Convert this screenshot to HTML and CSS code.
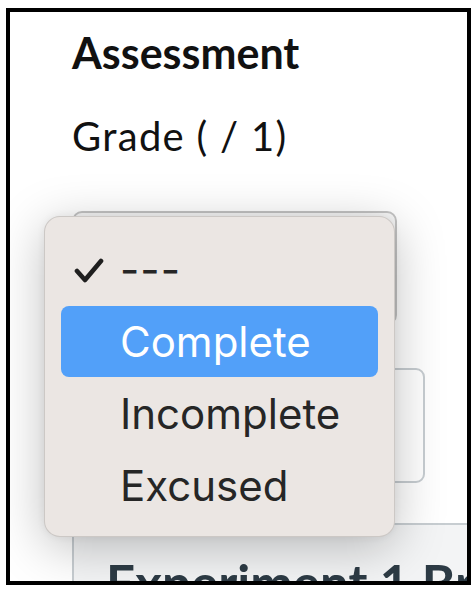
FILE: index.html
```html
<!DOCTYPE html>
<html lang="en">
<head>
<meta charset="utf-8">
<title>Assessment</title>
<link rel="stylesheet" href="styles.css">
</head>
<body>
<div class="frame">
  <div class="content">
    <h2 class="title">Assessment</h2>
    <div class="label">Grade ( / 1)</div>
    <div class="select"></div>
    <div class="field"></div>
    <div class="card">
      <div class="card-title">Experiment 1 Brief</div>
    </div>
  </div>
  <div class="menu">
    <div class="item">
      <svg class="check" viewBox="0 0 30 26" width="30" height="26"><path d="M3 13 L11 22 L27 3" fill="none" stroke="#1f1f1f" stroke-width="4.6" stroke-linecap="round" stroke-linejoin="round"/></svg>
      <span class="dash">---</span>
    </div>
    <div class="item active">Complete</div>
    <div class="item">Incomplete</div>
    <div class="item">Excused</div>
  </div>
</div>
</body>
</html>
```

FILE: styles.css
```css
html, body {
  margin: 0;
  padding: 0;
  background: #ffffff;
}

.frame {
  margin: 8px 0 0 6px;
  width: 465px;
  height: 577px;
  border: 4px solid #000;
  box-sizing: border-box;
  position: relative;
  overflow: hidden;
  background: #ffffff;
}

.content {
  padding-left: 62px;
  font-family: Lato, "Liberation Sans", sans-serif;
  color: #111;
}

.title {
  margin: 15px 0 0 0;
  font-size: 43px;
  line-height: 52px;
  font-weight: 700;
}

.label {
  margin-top: 33px;
  font-size: 40px;
  line-height: 48px;
  font-weight: 400;
  letter-spacing: 1.3px;
}

.select {
  margin-top: 51px;
  width: 325px;
  height: 114px;
  box-sizing: border-box;
  border: 2px solid #c4c4c4;
  border-radius: 10px;
  background: #f7f7f7;
}

.field {
  margin-top: 43px;
  width: 353px;
  height: 115px;
  box-sizing: border-box;
  border: 2px solid #c7cdd1;
  border-radius: 9px;
  background: #ffffff;
}

.card {
  margin-top: 40px;
  width: 440px;
  height: 120px;
  box-sizing: border-box;
  border-top: 2px solid #c7cdd1;
  border-left: 2px solid #c7cdd1;
  background: #f3f4f5;
  padding: 28px 0 0 32px;
}

.card-title {
  font-size: 51px;
  line-height: 60px;
  font-weight: 700;
  color: #2d3b45;
  white-space: nowrap;
}

.menu {
  position: absolute;
  left: 34px;
  top: 204px;
  width: 351px;
  height: 321px;
  box-sizing: border-box;
  padding: 17px 16px 0 16px;
  background: #ebe6e3;
  border: 1px solid rgba(0, 0, 0, 0.13);
  border-radius: 16px;
  box-shadow: 0 10px 50px rgba(0, 0, 0, 0.25), 0 0 8px rgba(0, 0, 0, 0.06);
  font-family: Inter, "Noto Sans", sans-serif;
  font-size: 42px;
  color: #262626;
}

.item {
  position: relative;
  height: 72px;
  line-height: 72px;
  padding-left: 59px;
  border-radius: 8px;
  white-space: nowrap;
}

.item.active {
  height: 71px;
  line-height: 71px;
  background: #52a0f9;
  color: #ffffff;
  margin-bottom: 1px;
}

.check {
  position: absolute;
  left: 13px;
  top: 24px;
}

.dash {
  letter-spacing: 1px;
}
```
